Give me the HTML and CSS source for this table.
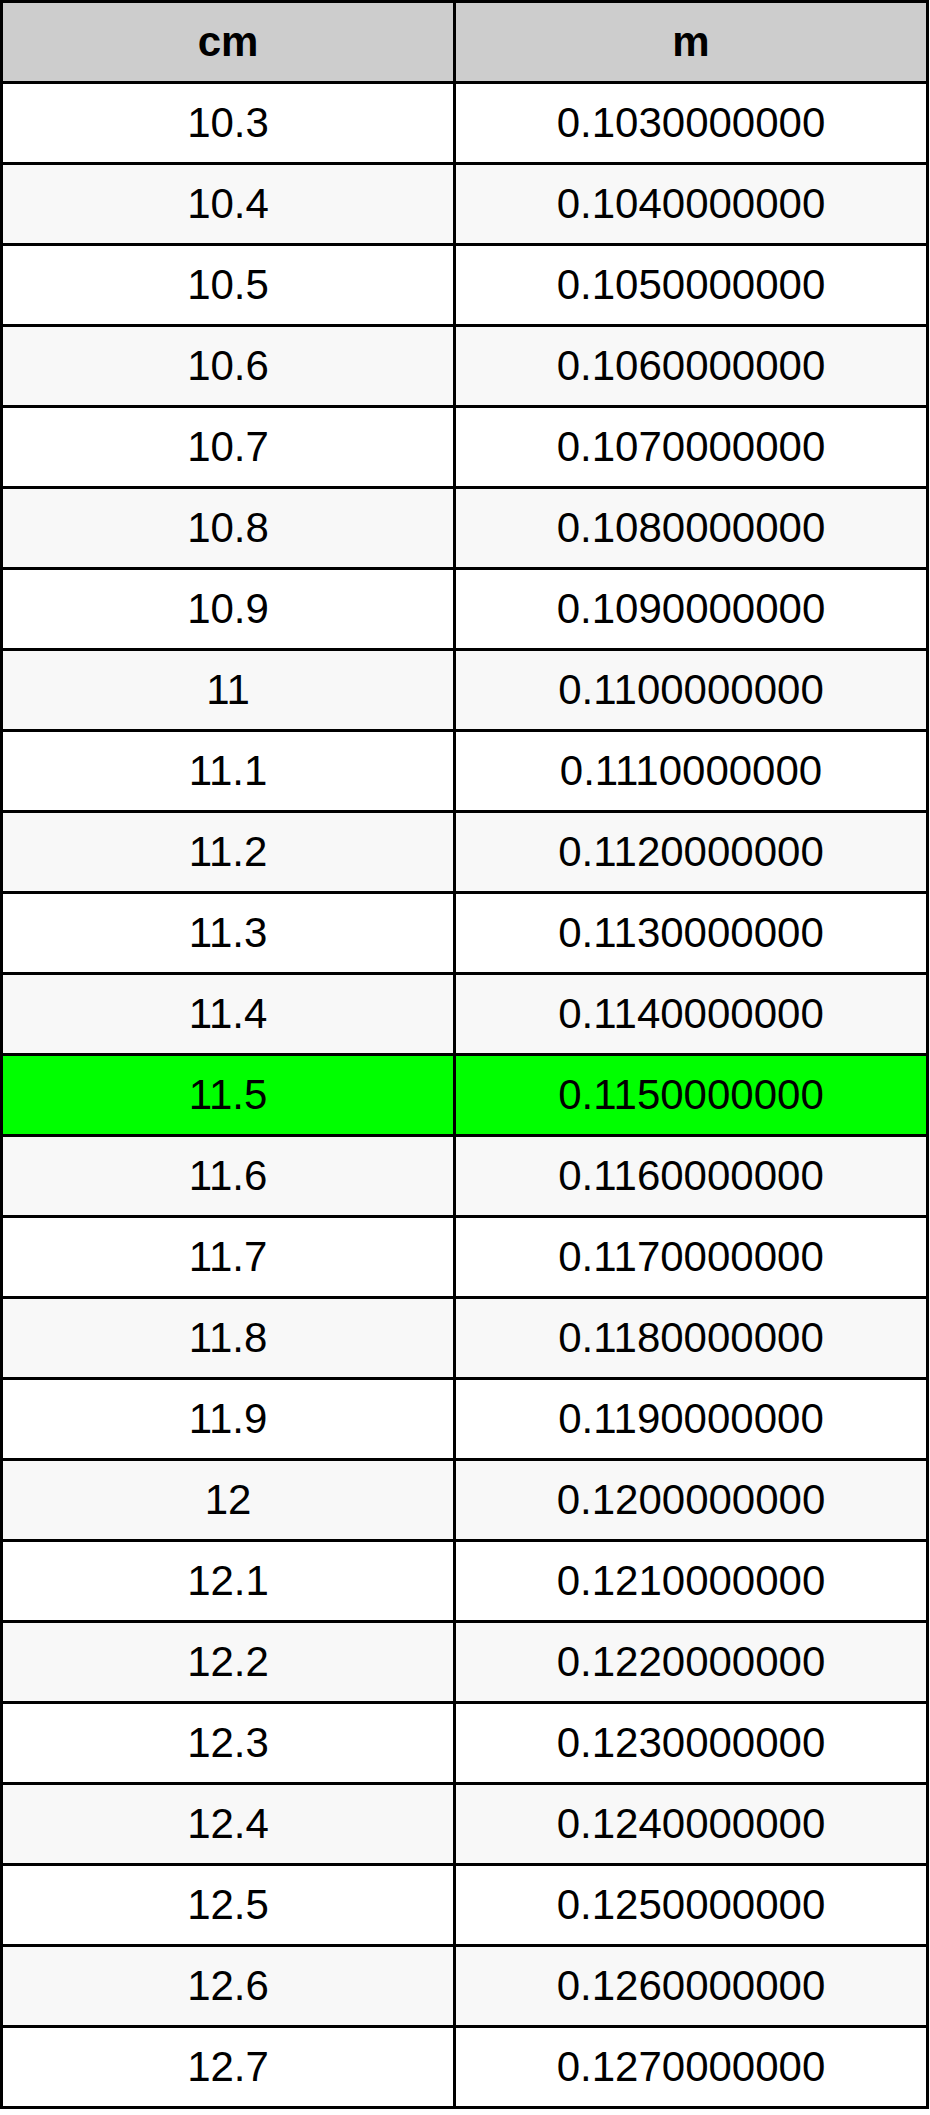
FILE: index.html
```html
<!DOCTYPE html>
<html>
<head>
<meta charset="utf-8">
<title>cm to m</title>
<link rel="stylesheet" href="styles.css">
</head>
<body>
<table class="conv">
<thead>
<tr><th class="c1">cm</th><th class="c2">m</th></tr>
</thead>
<tbody>
<tr><td>10.3</td><td>0.1030000000</td></tr>
<tr class="alt"><td>10.4</td><td>0.1040000000</td></tr>
<tr><td>10.5</td><td>0.1050000000</td></tr>
<tr class="alt"><td>10.6</td><td>0.1060000000</td></tr>
<tr><td>10.7</td><td>0.1070000000</td></tr>
<tr class="alt"><td>10.8</td><td>0.1080000000</td></tr>
<tr><td>10.9</td><td>0.1090000000</td></tr>
<tr class="alt"><td>11</td><td>0.1100000000</td></tr>
<tr><td>11.1</td><td>0.1110000000</td></tr>
<tr class="alt"><td>11.2</td><td>0.1120000000</td></tr>
<tr><td>11.3</td><td>0.1130000000</td></tr>
<tr class="alt"><td>11.4</td><td>0.1140000000</td></tr>
<tr class="hl"><td>11.5</td><td>0.1150000000</td></tr>
<tr class="alt"><td>11.6</td><td>0.1160000000</td></tr>
<tr><td>11.7</td><td>0.1170000000</td></tr>
<tr class="alt"><td>11.8</td><td>0.1180000000</td></tr>
<tr><td>11.9</td><td>0.1190000000</td></tr>
<tr class="alt"><td>12</td><td>0.1200000000</td></tr>
<tr><td>12.1</td><td>0.1210000000</td></tr>
<tr class="alt"><td>12.2</td><td>0.1220000000</td></tr>
<tr><td>12.3</td><td>0.1230000000</td></tr>
<tr class="alt"><td>12.4</td><td>0.1240000000</td></tr>
<tr><td>12.5</td><td>0.1250000000</td></tr>
<tr class="alt"><td>12.6</td><td>0.1260000000</td></tr>
<tr><td>12.7</td><td>0.1270000000</td></tr>
</tbody>
</table>
</body>
</html>
```

FILE: styles.css
```css
html, body {
  margin: 0;
  padding: 0;
  background: #fff;
}
.conv {
  border-collapse: separate;
  border-spacing: 0;
  border-top: 3px solid #000;
  border-left: 3px solid #000;
  table-layout: fixed;
  width: 929px;
  font-family: "Liberation Sans", Arial, sans-serif;
  font-size: 42px;
  color: #000;
}
.conv th, .conv td {
  border-right: 3px solid #000;
  border-bottom: 3px solid #000;
  height: 78px;
  padding: 0;
  text-align: center;
  vertical-align: middle;
  line-height: 1;
  box-sizing: content-box;
}
.conv th {
  background: #cdcdcd;
  font-weight: bold;
}
.conv .c1 { width: 450px; }
.conv .c2 { width: 470px; }
.conv tr.alt td { background: #f8f8f8; }
.conv tr.hl td { background: #00ff00; }
```
